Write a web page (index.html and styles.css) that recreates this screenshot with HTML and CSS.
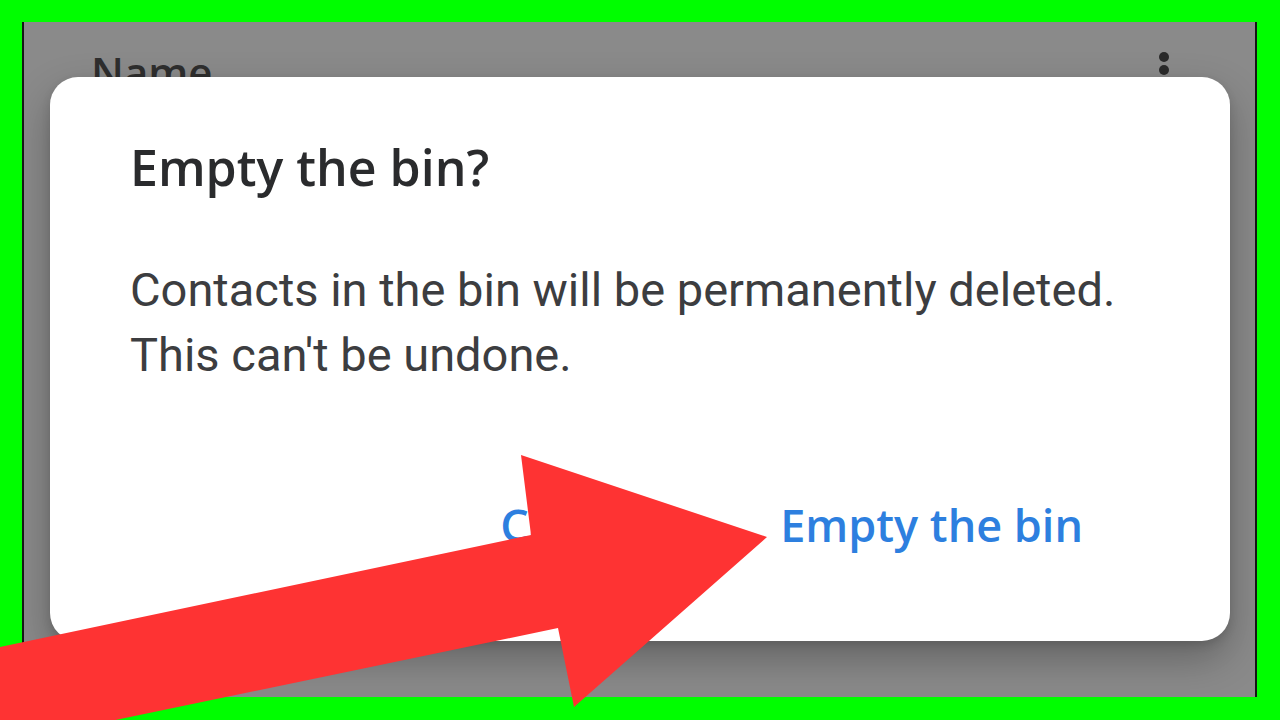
FILE: index.html
```html
<!DOCTYPE html>
<html lang="en">
<head>
<meta charset="utf-8">
<title>Empty the bin?</title>
<link rel="stylesheet" href="styles.css">
</head>
<body>
<div class="frame">
  <div class="screen">
    <div class="list-header">
      <span class="list-title">Name</span>
      <span class="more" aria-label="More options"><i></i><i></i><i></i></span>
    </div>
    <div class="dialog" role="dialog">
      <h1 class="dialog-title">Empty the bin?</h1>
      <p class="dialog-body">Contacts in the bin will be permanently deleted.<br>This can't be undone.</p>
      <div class="dialog-actions">
        <button class="btn">Cancel</button>
        <button class="btn">Empty the bin</button>
      </div>
    </div>
  </div>
</div>
<svg class="arrow" width="1280" height="720" viewBox="0 0 1280 720" aria-hidden="true">
  <polygon points="0,647 531,535 521,455 767,537 574,707 558,628 0,744" fill="#fe3333"/>
</svg>
</body>
</html>
```

FILE: styles.css
```css
html, body {
  margin: 0;
  padding: 0;
}
body {
  width: 1280px;
  height: 720px;
  background: #00fe00;
  overflow: hidden;
  position: relative;
}
.frame {
  padding: 22px 23px 23px 22px;
  height: 720px;
  box-sizing: border-box;
}
.screen {
  position: relative;
  height: 100%;
  box-sizing: border-box;
  background: #8a8a8a;
  border-left: 2px solid #151515;
  border-right: 2px solid #151515;
  overflow: hidden;
}
.list-header {
  display: flex;
  justify-content: space-between;
  align-items: flex-start;
  padding: 27px 86px 0 67px;
}
.list-title {
  font-family: "Open Sans", sans-serif;
  font-weight: 600;
  font-size: 42px;
  line-height: 46px;
  color: #2e2e2e;
}
.more {
  display: flex;
  flex-direction: column;
  gap: 3px;
  padding-top: 3px;
}
.more i {
  display: block;
  width: 10px;
  height: 10px;
  border-radius: 50%;
  background: #2a2a2a;
}
.dialog {
  position: absolute;
  left: 26px;
  top: 55px;
  width: 1180px;
  height: 564px;
  box-sizing: border-box;
  background: #ffffff;
  border-radius: 28px;
  box-shadow: 0 18px 40px rgba(0, 0, 0, 0.28), 0 4px 10px rgba(0, 0, 0, 0.12);
  padding: 62px 80px 0 80px;
  display: flex;
  flex-direction: column;
}
.dialog-title {
  margin: 0;
  font-family: "Open Sans", sans-serif;
  font-weight: 600;
  font-size: 50px;
  line-height: 56px;
  color: #2a2b2d;
}
.dialog-body {
  margin: 62px 0 0 0;
  font-family: Roboto, sans-serif;
  font-weight: 400;
  font-size: 47px;
  line-height: 65px;
  color: #3c3d40;
}
.dialog-actions {
  display: flex;
  justify-content: flex-end;
  gap: 136px;
  margin-top: 110px;
  padding-right: 67px;
}
.btn {
  border: 0;
  background: none;
  padding: 0;
  font-family: "Open Sans", sans-serif;
  font-weight: 600;
  font-size: 45px;
  line-height: 56px;
  color: #2d7fdf;
}
.arrow {
  position: absolute;
  left: 0;
  top: 0;
}
```
